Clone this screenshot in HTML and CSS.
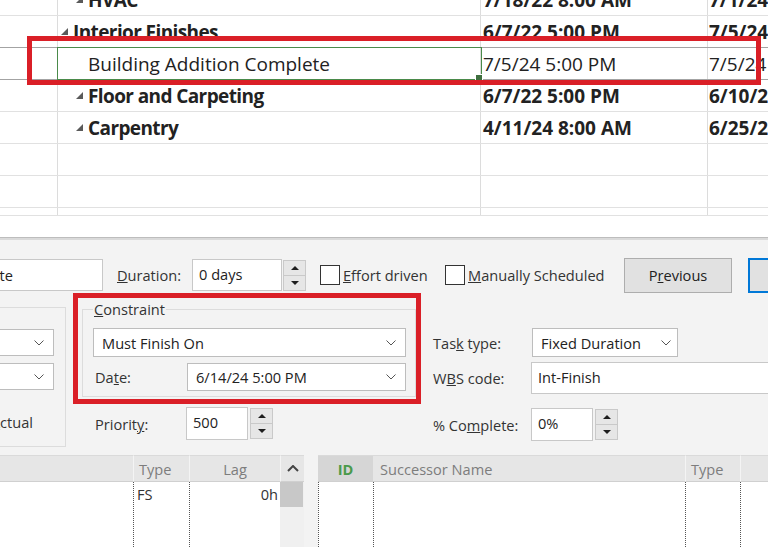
FILE: index.html
```html
<!DOCTYPE html>
<html lang="en">
<head>
    <meta charset="UTF-8">
    <meta name="viewport" content="width=device-width, initial-scale=1.0">
    <title>Task Details Form</title>
    <link rel="stylesheet" href="styles.css">
</head>
<body>
    <div class="sheet">
        <div class="grid">
            <div class="row summary">
                <div class="cell c-id"></div>
                <div class="cell c-name lvl2"><svg class="tri" viewBox="0 0 7 7"><polygon points="7,0 7,7 0,7"/></svg>HVAC</div>
                <div class="cell c-start">7/18/22 8:00 AM</div>
                <div class="cell c-finish">7/1/24 5:00 PM</div>
            </div>
            <div class="row summary">
                <div class="cell c-id"></div>
                <div class="cell c-name lvl1"><svg class="tri" viewBox="0 0 7 7"><polygon points="7,0 7,7 0,7"/></svg>Interior Finishes</div>
                <div class="cell c-start">6/7/22 5:00 PM</div>
                <div class="cell c-finish">7/5/24 5:00 PM</div>
            </div>
            <div class="row sel">
                <div class="cell c-id"></div>
                <div class="cell c-name lvl2"><span class="tri blank"></span>Building Addition Complete</div>
                <div class="cell c-start">7/5/24 5:00 PM</div>
                <div class="cell c-finish">7/5/24 5:00 PM</div>
            </div>
            <div class="row summary">
                <div class="cell c-id"></div>
                <div class="cell c-name lvl2"><svg class="tri" viewBox="0 0 7 7"><polygon points="7,0 7,7 0,7"/></svg>Floor and Carpeting</div>
                <div class="cell c-start">6/7/22 5:00 PM</div>
                <div class="cell c-finish">6/10/24 5:00 PM</div>
            </div>
            <div class="row summary">
                <div class="cell c-id"></div>
                <div class="cell c-name lvl2"><svg class="tri" viewBox="0 0 7 7"><polygon points="7,0 7,7 0,7"/></svg>Carpentry</div>
                <div class="cell c-start">4/11/24 8:00 AM</div>
                <div class="cell c-finish">6/25/24 5:00 PM</div>
            </div>
            <div class="row">
                <div class="cell c-id"></div>
                <div class="cell c-name"></div>
                <div class="cell c-start"></div>
                <div class="cell c-finish"></div>
            </div>
            <div class="row">
                <div class="cell c-id"></div>
                <div class="cell c-name"></div>
                <div class="cell c-start"></div>
                <div class="cell c-finish"></div>
            </div>
            <div class="row stub">
                <div class="cell c-id"></div>
                <div class="cell c-name"></div>
                <div class="cell c-start"></div>
                <div class="cell c-finish"></div>
            </div>
        </div>
    </div>
    <div class="splitter"></div>

    <div class="form">
        <div class="line line-top">
            <div class="field name-field">Building Addition Complete</div>
            <span class="lbl lbl-dur"><u>D</u>uration:</span>
            <div class="field dur-field">0 days</div>
            <div class="spin">
                <span><svg viewBox="0 0 8 4"><polygon points="0,4 4,0 8,4"/></svg></span>
                <span><svg viewBox="0 0 8 4"><polygon points="0,0 8,0 4,4"/></svg></span>
            </div>
            <span class="check"></span>
            <span class="lbl lbl-effort"><u>E</u>ffort driven</span>
            <span class="check"></span>
            <span class="lbl lbl-manual"><u>M</u>anually Scheduled</span>
            <button class="btn">P<u>r</u>evious</button>
            <button class="btn btn-default">Ne<u>x</u>t</button>
        </div>

        <div class="line line-mid">
            <div class="dates">
                <div class="field select">Start <svg class="chev" viewBox="0 0 10 6"><polyline points="0.5,0.5 5,5 9.5,0.5"/></svg></div>
                <div class="field select second">Finish <svg class="chev" viewBox="0 0 10 6"><polyline points="0.5,0.5 5,5 9.5,0.5"/></svg></div>
                <div class="radios"><u>A</u>ctual</div>
            </div>

            <div class="col-constraint">
                <fieldset class="group">
                    <legend><u>C</u>onstraint</legend>
                    <div class="field select wide">Must Finish On <svg class="chev" viewBox="0 0 10 6"><polyline points="0.5,0.5 5,5 9.5,0.5"/></svg></div>
                    <div class="pair">
                        <span class="lbl lbl-date">Da<u>t</u>e:</span>
                        <div class="field select grow">6/14/24 5:00 PM <svg class="chev" viewBox="0 0 10 6"><polyline points="0.5,0.5 5,5 9.5,0.5"/></svg></div>
                    </div>
                </fieldset>
                <div class="pair priority">
                    <span class="lbl lbl-prio">Priorit<u>y</u>:</span>
                    <div class="field num-field">500</div>
                    <div class="spin">
                        <span><svg viewBox="0 0 8 4"><polygon points="0,4 4,0 8,4"/></svg></span>
                        <span><svg viewBox="0 0 8 4"><polygon points="0,0 8,0 4,4"/></svg></span>
                    </div>
                </div>
            </div>

            <div class="col-task">
                <div class="pair">
                    <span class="lbl lbl-side">Tas<u>k</u> type:</span>
                    <div class="field select tasktype">Fixed Duration <svg class="chev" viewBox="0 0 10 6"><polyline points="0.5,0.5 5,5 9.5,0.5"/></svg></div>
                </div>
                <div class="pair wbs">
                    <span class="lbl lbl-side">W<u>B</u>S code:</span>
                    <div class="field wbs-field">Int-Finish</div>
                </div>
                <div class="pair complete">
                    <span class="lbl lbl-side">% Co<u>m</u>plete:</span>
                    <div class="field num-field">0%</div>
                    <div class="spin">
                        <span><svg viewBox="0 0 8 4"><polygon points="0,4 4,0 8,4"/></svg></span>
                        <span><svg viewBox="0 0 8 4"><polygon points="0,0 8,0 4,4"/></svg></span>
                    </div>
                </div>
            </div>
        </div>

        <div class="line line-bottom">
            <div class="tbl tbl-pred">
                <div class="th">Predecessor Name</div>
                <div class="th sep">Type</div>
                <div class="th sep center">Lag</div>
                <div class="th sep scroll-up"><svg viewBox="0 0 12 7"><polyline points="1,6 6,1 11,6"/></svg></div>
                <div class="td"></div>
                <div class="td dot">FS</div>
                <div class="td dot right">0h</div>
                <div class="td track"><span class="thumb"></span></div>
            </div>
            <div class="tbl tbl-succ">
                <div class="th id">ID</div>
                <div class="th">Successor Name</div>
                <div class="th sep">Type</div>
                <div class="th sep"></div>
                <div class="td dot"></div>
                <div class="td dot"></div>
                <div class="td dot"></div>
                <div class="td dot"></div>
            </div>
        </div>
    </div>

    <div class="callout callout-row"></div>
    <div class="callout callout-constraint"></div>
</body>
</html>
```

FILE: styles.css
```css
* {
    box-sizing: border-box;
}

html, body {
    margin: 0;
    padding: 0;
}

body {
    position: relative;
    width: 768px;
    height: 547px;
    overflow: hidden;
    font-family: "Open Sans", "Noto Sans", sans-serif;
    color: #222;
    background-color: #fff;
}

/* top gantt sheet */

.sheet {
    height: 237px;
    overflow: hidden;
    background-color: #fff;
}

.grid {
    margin-top: -16px;
}

.row {
    display: flex;
    height: 32px;
    border-bottom: 1px solid #e1e1e1;
    font-size: 19px;
}

.row.stub {
    height: 8px;
}

.row.summary {
    font-weight: 700;
}

.row.summary .c-name {
    letter-spacing: -0.6px;
}

.row.sel {
    height: 33px;
    margin-top: -1px;
    border-top: 1px solid #a3a3a3;
    border-bottom-color: #a3a3a3;
}

.cell {
    display: flex;
    align-items: center;
    white-space: nowrap;
    overflow: hidden;
    border-right: 1px solid #dcdcdc;
}

.c-id {
    width: 58px;
}

.c-name {
    width: 423px;
}

.c-start {
    width: 227px;
    padding-left: 2px;
}

.c-finish {
    flex: 1;
    padding-left: 1px;
    border-right: none;
}

.lvl1 {
    padding-left: 3px;
}

.lvl2 {
    padding-left: 18px;
}

.tri {
    flex: none;
    width: 7px;
    height: 7px;
    margin-right: 5px;
    fill: #5a5a5a;
}

.tri.blank {
    display: inline-block;
}

.sel .c-name {
    position: relative;
    overflow: visible;
    outline: 1px solid #4a8a4a;
}

.sel .c-name::after {
    content: "";
    position: absolute;
    right: -3px;
    bottom: -3px;
    width: 6px;
    height: 6px;
    background-color: #3f6f3f;
    border: 1px solid #fff;
}

.splitter {
    height: 3px;
    border-top: 1px solid #bdbdbd;
    background-color: #dadada;
}

/* task details form */

.form {
    height: 307px;
    padding-top: 18px;
    background-color: #f3f3f3;
    font-size: 14.6px;
    color: #333;
    overflow: hidden;
}

.line {
    display: flex;
    white-space: nowrap;
}

.line-top {
    align-items: center;
    height: 34px;
}

.field {
    flex: none;
    display: flex;
    align-items: center;
    height: 32px;
    padding: 0 6px;
    background-color: #fff;
    border: 1px solid #c8c8c8;
    overflow: hidden;
    white-space: nowrap;
    color: #222;
}

.name-field {
    width: 200px;
    margin-left: -97px;
    justify-content: flex-end;
    padding-right: 89px;
}

.lbl {
    flex: none;
}

.lbl-dur {
    width: 75px;
    margin-left: 14px;
}

.dur-field {
    width: 90px;
    padding-bottom: 3px;
}

.spin {
    flex: none;
    display: flex;
    flex-direction: column;
    width: 23px;
    height: 31px;
    margin-left: 1px;
    border: 1px solid #c9c9c9;
    background-color: #e6e6e6;
}

.spin span {
    flex: 1;
    display: flex;
    align-items: center;
    justify-content: center;
}

.spin span + span {
    border-top: 1px solid #c9c9c9;
}

.spin svg {
    width: 8px;
    height: 4px;
    fill: #1e1e1e;
}

.check {
    flex: none;
    width: 20px;
    height: 20px;
    margin-left: 14px;
    background-color: #fff;
    border: 1px solid #333;
}

.lbl-effort {
    width: 102px;
    margin-left: 3px;
}

.lbl-effort + .check {
    margin-left: 0;
}

.lbl-manual {
    width: 156px;
    margin-left: 3px;
}

.btn {
    flex: none;
    width: 108px;
    height: 35px;
    padding: 0;
    font: inherit;
    color: #222;
    background-color: #e1e1e1;
    border: 1px solid #adadad;
}

.btn-default {
    margin-left: 16px;
    border-color: #0078d7;
    box-shadow: inset 0 0 0 1px #0078d7;
}

.line-mid {
    align-items: flex-start;
    height: 148px;
    margin-top: 7px;
}

.dates {
    flex: none;
    width: 166px;
    height: 140px;
    margin-top: 8px;
    margin-left: -100px;
    padding: 21px 11px 0 0;
    border: 1px solid #dcdcdc;
}

.select {
    justify-content: space-between;
    height: 27px;
    padding: 0 9px 0 8px;
    border-color: #bdbdbd;
}

.select.second {
    margin-top: 7px;
}

.chev {
    flex: none;
    width: 10px;
    height: 6px;
    fill: none;
    stroke: #555;
    stroke-width: 1;
}

.radios {
    display: flex;
    justify-content: flex-end;
    margin-top: 22px;
    padding-right: 21px;
}

.col-constraint {
    flex: none;
    width: 334px;
    margin-left: 16px;
}

.group {
    margin: 0;
    padding: 9px 9px 5px 10px;
    min-width: 0;
    border: 1px solid #dcdcdc;
}

.group legend {
    padding: 0 1px;
    line-height: 20px;
}

.select.wide {
    height: 29px;
}

.pair {
    display: flex;
    align-items: center;
}

.group .pair {
    margin-top: 6px;
}

.lbl-date {
    width: 94px;
    padding-left: 2px;
}

.select.grow {
    flex: 1;
    height: 28px;
}

.priority {
    margin-top: 10px;
}

.lbl-prio {
    width: 104px;
    padding-left: 13px;
}

.num-field {
    width: 62px;
    height: 33px;
    padding-bottom: 3px;
}

.priority .spin,
.complete .spin {
    margin-left: 2px;
}

.col-task {
    flex: 1;
    margin-left: 17px;
    margin-top: 29px;
}

.lbl-side {
    width: 98px;
}

.select.tasktype {
    width: 146px;
    height: 29px;
    margin-left: 1px;
    padding-right: 6px;
}

.wbs {
    margin-top: 5px;
}

.wbs-field {
    width: 260px;
    padding-bottom: 3px;
}

.complete {
    margin-top: 14px;
}

/* predecessor / successor tables */

.line-bottom {
    height: 92px;
    margin-top: 8px;
}

.tbl {
    display: grid;
    grid-template-rows: 27px 1fr;
    flex: none;
    background-color: #fff;
}

.tbl-pred {
    width: 504px;
    margin-left: -200px;
    grid-template-columns: 333px 56px 91px 24px;
}

.tbl-succ {
    flex: 1;
    margin-left: 14px;
    grid-template-columns: 55px 312px 55px 1fr;
}

.th {
    display: flex;
    align-items: center;
    padding-left: 5px;
    background-color: #e6e6e6;
    border-top: 1px solid #dadada;
    border-bottom: 1px solid #d0d0d0;
    color: #7d7d7d;
    overflow: hidden;
}

.th.sep {
    border-left: 1px solid #f4f4f4;
}

.th.center {
    justify-content: center;
    padding-left: 0;
}

.th.id {
    justify-content: center;
    padding-left: 0;
    background-color: #d6d6d6;
    color: #4b9a4b;
    font-weight: 700;
}

.tbl-succ .th:nth-child(2) {
    padding-left: 7px;
}

.scroll-up {
    justify-content: center;
    padding-left: 0;
}

.scroll-up svg {
    width: 12px;
    height: 7px;
    fill: none;
    stroke: #444;
    stroke-width: 2;
}

.td {
    padding: 1px 3px 0;
    line-height: 22px;
    color: #333;
}

.td.dot {
    border-left: 1px dotted #555;
}

.td.right {
    text-align: right;
    padding-right: 2px;
}

.td.track {
    padding: 0;
    background-color: #f0f0f0;
}

.thumb {
    display: block;
    width: 23px;
    height: 25px;
    background-color: #c8c8c8;
}

/* red annotation boxes drawn over the screenshot */

.callout {
    position: absolute;
    border: 5px solid #da1f27;
    pointer-events: none;
}

.callout-row {
    left: 27px;
    top: 36px;
    width: 734px;
    height: 49px;
}

.callout-constraint {
    left: 73px;
    top: 293px;
    width: 348px;
    height: 111px;
}
```
